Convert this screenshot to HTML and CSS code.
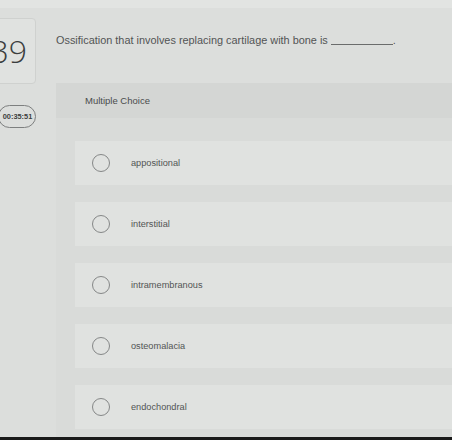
FILE: index.html
```html
<!DOCTYPE html>
<html>
<head>
<meta charset="utf-8">
<link rel="stylesheet" href="styles.css">
</head>
<body>
<div class="topbar"></div>
<div class="page">
  <aside class="side">
    <div class="qnum">39</div>
    <div class="timer">00:35:51</div>
  </aside>
  <main class="main">
    <p class="question">Ossification that involves replacing cartilage with bone is <span class="blank"></span>.</p>
    <section class="panel">
      <div class="panel-head">Multiple Choice</div>
      <ul class="options">
        <li class="option"><span class="radio"></span><span class="label">appositional</span></li>
        <li class="option"><span class="radio"></span><span class="label">interstitial</span></li>
        <li class="option"><span class="radio"></span><span class="label">intramembranous</span></li>
        <li class="option"><span class="radio"></span><span class="label">osteomalacia</span></li>
        <li class="option"><span class="radio"></span><span class="label">endochondral</span></li>
      </ul>
    </section>
  </main>
</div>
<div class="bottombar"></div>
</body>
</html>
```
FILE: styles.css
```css
html, body {
  margin: 0;
  padding: 0;
}
body {
  width: 452px;
  height: 440px;
  overflow: hidden;
  background: #dcdedc;
  font-family: "Liberation Sans", Arial, sans-serif;
  color: #4a4c4c;
  display: flex;
  flex-direction: column;
}
.topbar {
  height: 8px;
  background: #e2e4e2;
  flex: none;
}
.page {
  flex: 1;
  display: flex;
  min-height: 0;
}
.side {
  width: 56px;
  flex: none;
  display: flex;
  flex-direction: column;
  align-items: flex-end;
  padding-right: 20px;
  box-sizing: border-box;
}
.qnum {
  margin-top: 10px;
  width: 50px;
  height: 66px;
  box-sizing: border-box;
  border: 1px solid #cfd1cf;
  border-radius: 4px;
  background: #e0e2e0;
  font-family: "Open Sans", sans-serif;
  font-weight: 300;
  font-size: 32px;
  color: #3c3e3e;
  display: flex;
  align-items: center;
  justify-content: flex-end;
  padding-right: 8px;
  padding-bottom: 1px;
}
.timer {
  margin-top: 21px;
  width: 38px;
  height: 23px;
  box-sizing: border-box;
  border: 1px solid #7d7f7f;
  border-radius: 12px;
  font-size: 7.4px;
  font-weight: bold;
  color: #3c3e3e;
  display: flex;
  align-items: center;
  justify-content: center;
  padding-left: 1px;
}
.main {
  flex: 1;
  display: flex;
  flex-direction: column;
  min-width: 0;
}
.question {
  margin: 26px 0 0 0;
  font-size: 10.9px;
  line-height: 12px;
  color: #525454;
  height: 49px;
  white-space: nowrap;
}
.blank {
  display: inline-block;
  width: 62px;
  border-bottom: 1px solid #6a6c6c;
  vertical-align: -1px;
}
.panel {
  flex: 1;
  background: #d9dbd9;
  display: flex;
  flex-direction: column;
}
.panel-head {
  height: 35px;
  background: #d4d6d4;
  padding-left: 29px;
  font-size: 9.5px;
  line-height: 36px;
  color: #4a4c4c;
  flex: none;
}
.options {
  list-style: none;
  margin: 0;
  padding: 23px 0 0 19px;
  display: flex;
  flex-direction: column;
  gap: 17px;
}
.option {
  height: 44px;
  background: #e0e2e0;
  display: flex;
  align-items: center;
  padding-left: 17px;
}
.radio {
  width: 16px;
  height: 16px;
  border: 1.3px solid #858787;
  border-radius: 50%;
  flex: none;
}
.label {
  margin-left: 21px;
  font-size: 9.2px;
  color: #525454;
}
.bottombar {
  height: 3px;
  background: #1a1a1a;
  flex: none;
}
```
